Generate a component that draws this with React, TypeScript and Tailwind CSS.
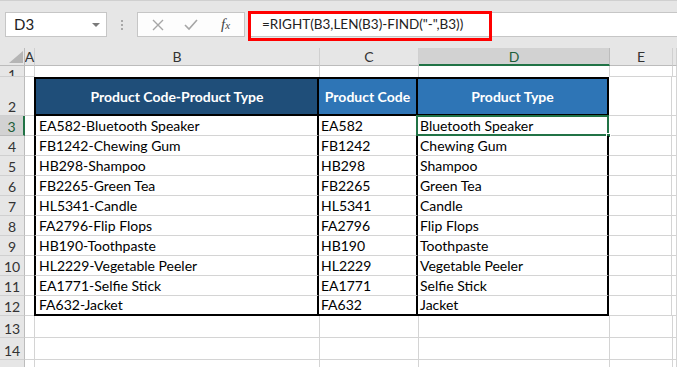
import React from "react";

const rows = [
  ["EA582-Bluetooth Speaker", "EA582", "Bluetooth Speaker"],
  ["FB1242-Chewing Gum", "FB1242", "Chewing Gum"],
  ["HB298-Shampoo", "HB298", "Shampoo"],
  ["FB2265-Green Tea", "FB2265", "Green Tea"],
  ["HL5341-Candle", "HL5341", "Candle"],
  ["FA2796-Flip Flops", "FA2796", "Flip Flops"],
  ["HB190-Toothpaste", "HB190", "Toothpaste"],
  ["HL2229-Vegetable Peeler", "HL2229", "Vegetable Peeler"],
  ["EA1771-Selfie Stick", "EA1771", "Selfie Stick"],
  ["FA632-Jacket", "FA632", "Jacket"],
];

const font = { fontFamily: "Lato, 'Open Sans', sans-serif" };

const FormulaBar = () => (
  <div className="h-[48px] bg-[#e6e6e6] border-t border-[#d0d0d0] flex items-start pt-[11px] relative">
    <div className="ml-[5px] w-[102px] h-[25px] bg-white border border-[#c6c6c6] flex items-center justify-between pl-[8px] pr-[6px]">
      <span className="text-[15px] text-[#222]">D3</span>
      <span className="w-0 h-0 border-l-[4px] border-r-[4px] border-t-[4px] border-l-transparent border-r-transparent border-t-[#7a7a7a]" />
    </div>
    <div className="w-[30px] h-[25px] flex flex-col items-center justify-center gap-[2px]">
      <span className="w-[2px] h-[2px] bg-[#a8a8a8]" />
      <span className="w-[2px] h-[2px] bg-[#a8a8a8]" />
      <span className="w-[2px] h-[2px] bg-[#a8a8a8]" />
    </div>
    <div className="w-[108px] h-[25px] bg-[#fdfdfd] border border-[#c6c6c6] flex items-center">
      <svg className="ml-[14px]" width="12" height="12" viewBox="0 0 12 12">
        <path d="M1 1 L11 11 M11 1 L1 11" stroke="#a6a6a6" strokeWidth="1.4" fill="none" />
      </svg>
      <svg className="ml-[20px]" width="14" height="12" viewBox="0 0 14 12">
        <path d="M1 6 L5 10 L13 1" stroke="#a6a6a6" strokeWidth="1.6" fill="none" />
      </svg>
      <span className="ml-[23px] text-[15px] italic text-[#444]" style={{ fontFamily: "'Liberation Serif', serif" }}>
        f<span className="text-[11px]">x</span>
      </span>
    </div>
    <div className="ml-[3px] flex-1 h-[25px] bg-white border-y border-[#c6c6c6] flex items-center pl-[14px]">
      <span className="text-[13.5px] text-[#222]">=RIGHT(B3,LEN(B3)-FIND("-",B3))</span>
    </div>
    <div className="absolute left-[248px] top-[10px] w-[244px] h-[30px] border-[3px] border-[#ff0000]" />
  </div>
);

const colW = ["w-[25px]", "w-[10px]", "w-[285px]", "w-[99px]", "w-[191px]", "w-[63px]", "flex-1"];
const letters = ["", "A", "B", "C", "D", "E", ""];

const ColumnHeaders = () => (
  <div className="flex h-[18px]">
    <div className="w-[25px] bg-[#e6e6e6] border-r border-b border-[#bcbcbc] relative overflow-hidden">
      <svg className="absolute right-[1px] bottom-[2px]" width="14" height="12" viewBox="0 0 14 12">
        <path d="M14 0 L14 12 L0 12 Z" fill="#b5b5b5" />
      </svg>
    </div>
    {letters.slice(1).map((l, i) => {
      const sel = l === "D";
      return (
        <div
          key={i}
          className={`${colW[i + 1]} flex items-center justify-center text-[14px] border-r ${
            sel
              ? "bg-[#d2d2d2] border-r-[#bcbcbc] border-b-2 border-b-[#217346] text-[#1e5e3a]"
              : "bg-[#e6e6e6] border-r-[#d0d0d0] border-b border-b-[#bcbcbc] text-[#333]"
          }`}
        >
          {l}
        </div>
      );
    })}
  </div>
);

const RowHeader = ({ n, h, sel }: { n?: number; h: string; sel?: boolean }) => (
  <div
    className={`w-[25px] ${h} flex items-end justify-center overflow-hidden text-[14px] leading-[17px] border-b ${
      sel
        ? "bg-[#d2d2d2] border-r-2 border-r-[#217346] text-[#1e5e3a] border-b-[#bcbcbc]"
        : "bg-[#e6e6e6] border-r border-r-[#bcbcbc] text-[#333] border-b-[#d0d0d0]"
    }`}
  >
    {n}
  </div>
);

const Blank = ({ w, noBottom }: { w: string; noBottom?: boolean }) => (
  <div className={`${w} border-r border-[#d4d4d4] ${noBottom ? "" : "border-b"}`} />
);

const App = () => {
  return (
    <div className="w-[677px] h-[367px] overflow-hidden bg-white" style={font}>
      <FormulaBar />
      <ColumnHeaders />
      {/* row 1 */}
      <div className="flex h-[11px]">
        <div className="w-[25px] h-[11px] bg-[#e6e6e6] border-r border-b border-r-[#bcbcbc] border-b-[#d0d0d0] flex justify-center overflow-hidden">
          <span className="text-[14px] leading-[14px] text-[#333] mt-[2px]">1</span>
        </div>
        <Blank w="w-[10px]" />
        <Blank w="w-[285px]" noBottom />
        <Blank w="w-[99px]" noBottom />
        <Blank w="w-[191px]" noBottom />
        <Blank w="w-[63px]" />
        <Blank w="flex-1" />
      </div>
      {/* row 2 header */}
      <div className="flex h-[39px]">
        <RowHeader n={2} h="h-[39px]" />
        <div className="w-[10px] border-r border-b border-[#d4d4d4]" />
        <div className="w-[285px] -ml-[1px] pl-[1px] bg-[#1f4e79] border-2 border-black flex items-center justify-center text-white font-bold text-[14px]">
          Product Code-Product Type
        </div>
        <div className="w-[99px] bg-[#2e75b6] border-y-2 border-r-2 border-black flex items-center justify-center text-white font-bold text-[14px]">
          Product Code
        </div>
        <div className="w-[191px] bg-[#2e75b6] border-y-2 border-r-2 border-black flex items-center justify-center text-white font-bold text-[14px]">
          Product Type
        </div>
        <Blank w="w-[63px]" />
        <Blank w="flex-1" />
      </div>
      {rows.map((r, i) => {
        const last = i === rows.length - 1;
        const bottom = last ? "border-b-2 border-b-black" : "border-b border-b-[#d4d4d4]";
        return (
          <div key={i} className="flex h-[20px]">
            <RowHeader n={i + 3} h="h-[20px]" sel={i === 0} />
            <div className="w-[10px] border-r border-b border-[#d4d4d4]" />
            <div className={`w-[285px] -ml-[1px] border-x-2 border-x-black ${bottom} flex items-end pl-[3px] text-[14px] leading-[18px] text-black`}>
              {r[0]}
            </div>
            <div className={`w-[99px] border-r-2 border-r-black ${bottom} flex items-end pl-[2px] text-[14px] leading-[18px] text-black`}>
              {r[1]}
            </div>
            <div className={`w-[191px] border-r-2 border-r-black ${bottom} flex items-end pl-[2px] text-[14px] leading-[18px] text-black relative`}>
              {r[2]}
              {i === 0 && (
                <>
                  <div className="absolute -left-[2px] -top-[1px] w-[193px] h-[21px] border-2 border-[#217346]" />
                  <div className="absolute -right-[4px] -bottom-[3px] w-[5px] h-[5px] bg-[#217346] border border-white" />
                </>
              )}
            </div>
            <Blank w="w-[63px]" />
            <Blank w="flex-1" />
          </div>
        );
      })}
      {[13, 14, 0].map((n) => (
        <div key={n} className="flex h-[22px]">
          <RowHeader n={n || undefined} h="h-[22px]" />
          <Blank w="w-[10px]" />
          <Blank w="w-[285px]" />
          <Blank w="w-[99px]" />
          <Blank w="w-[191px]" />
          <Blank w="w-[63px]" />
          <Blank w="flex-1" />
        </div>
      ))}
    </div>
  );
};

export default App;
